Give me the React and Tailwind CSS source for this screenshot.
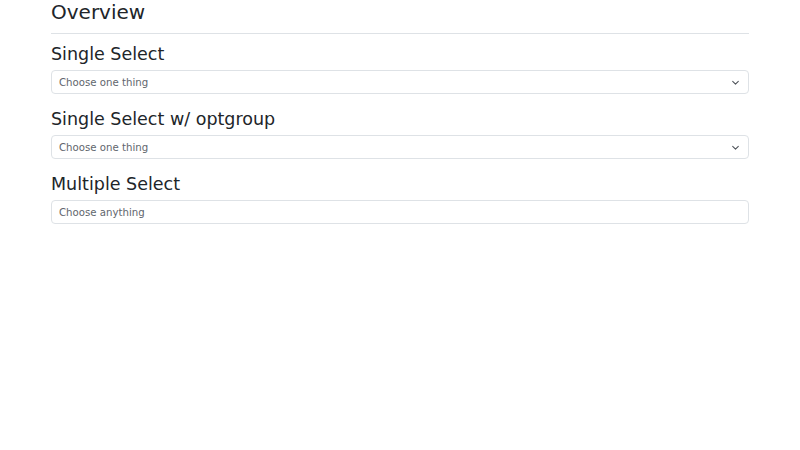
const font = { fontFamily: '"DejaVu Sans", sans-serif' };

function Chevron() {
  return (
    <svg viewBox="0 0 16 16" className="w-[9px] h-[9px]" fill="none">
      <path d="m3 6 5 5 5-5" stroke="#4b5057" strokeWidth="1.8" strokeLinecap="round" strokeLinejoin="round" />
    </svg>
  );
}

function Field({ title, placeholder, chevron, first }) {
  return (
    <section className={first ? "mt-[10px]" : "mt-[15px]"}>
      <h3 className="text-[17.5px] leading-[21px] text-[#212529] mb-[5px]">{title}</h3>
      <div className="h-[24px] border border-[#dee2e6] rounded-[4px] bg-white flex items-center justify-between pl-[7px] pr-[8px]">
        <span className="text-[10.2px] leading-[12px] pt-[1px] text-[#5f666d]">{placeholder}</span>
        {chevron && <Chevron />}
      </div>
    </section>
  );
}

export default function App() {
  return (
    <div className="min-h-screen bg-white" style={font}>
      <div className="w-[698px] mx-auto">
        <h2 className="text-[20px] leading-[24px] text-[#212529] pb-[9px] border-b border-[#dee2e6]">Overview</h2>
        <Field first title="Single Select" placeholder="Choose one thing" chevron />
        <Field title="Single Select w/ optgroup" placeholder="Choose one thing" chevron />
        <Field title="Multiple Select" placeholder="Choose anything" />
      </div>
    </div>
  );
}
